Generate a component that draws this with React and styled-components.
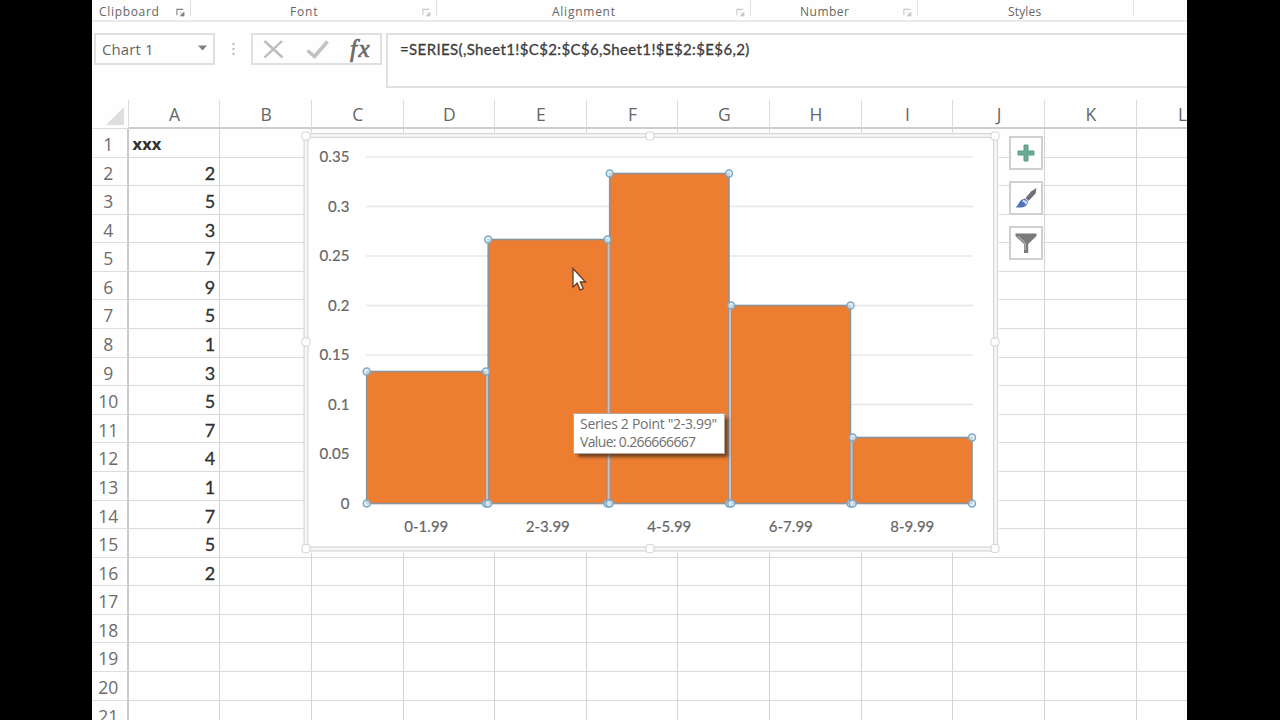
import React from 'react'
import styled, { createGlobalStyle } from 'styled-components'

const GlobalStyle = createGlobalStyle`
	* {
		box-sizing: border-box;
	}
	body {
		margin: 0;
		background: #000000;
		overflow: hidden;
	}
`
const Screen = styled.div`
	width: 1280px;
	height: 720px;
	padding: 0 93px 0 92px;
	background: #000000;
	font-family: 'Open Sans', 'Noto Sans', sans-serif;
`
const Workbook = styled.div`
	position: relative;
	display: flex;
	flex-direction: column;
	width: 1095px;
	height: 720px;
	overflow: hidden;
	background: #fefefe;
`
const Ribbon = styled.div`
	display: flex;
	flex: none;
	height: 22px;
	border-bottom: 2px solid #e9e9e9;
`
const RibbonGroup = styled.div`
	display: flex;
	flex: none;
	justify-content: space-between;
	width: ${(p) => p.$width}px;
	height: 16px;
	padding: 3px 5px 0 ${(p) => p.$indent}px;
	border-right: 1px solid #e2e2e2;
	color: #666666;
	font-size: 12px;
	font-weight: 500;
	line-height: 18px;
	letter-spacing: ${(p) => p.$spacing || 0}px;
	white-space: nowrap;
`
const Launcher = styled.svg`
	flex: none;
	width: 9px;
	height: 9px;
	margin-top: 5px;
	color: ${(p) => (p.$active ? '#808080' : '#c8c8c8')};
`
const FormulaRow = styled.div`
	display: flex;
	flex: none;
	align-items: flex-start;
	height: 78px;
	padding: 11px 0 0 2px;
`
const NameBox = styled.div`
	display: flex;
	align-items: center;
	justify-content: space-between;
	width: 121px;
	height: 32px;
	padding: 0 6px 0 6px;
	border: 2px solid #e0e0e0;
	color: #666666;
	font-size: 15px;
	font-weight: 500;
	letter-spacing: 0.1px;
`
const DropArrow = styled.svg`
	width: 9px;
	height: 6px;
	margin-bottom: 3px;
`
const Dots = styled.svg`
	width: 3px;
	height: 14px;
	margin: 9px 16px 0 17px;
`
const FormulaButtons = styled.div`
	width: 131px;
	height: 32px;
	border: 2px solid #e0e0e0;
`
const FormulaBar = styled.div`
	flex: 1;
	height: 55px;
	margin-left: 4px;
	padding: 3px 0 0 12px;
	border: 2px solid #e0e0e0;
	border-right: none;
	color: #3c3c3c;
	font-family: Lato, sans-serif;
	font-size: 15px;
	font-weight: 400;
	line-height: 22px;
	white-space: nowrap;
`
const FormulaText = styled.span`
	letter-spacing: 0.38px;
	-webkit-text-stroke: 0.3px #3c3c3c;
`
const SheetRow = styled.div`
	display: grid;
	flex: none;
	grid-template-columns: 36.6px repeat(12, 91.65px);
	grid-template-rows: 100%;
	height: ${(p) => (p.$header ? 29 : 28.58)}px;
`
const ColumnHead = styled.div`
	padding: 2px 0 0 1px;
	border-right: 1px solid #dcdcdc;
	border-bottom: 2px solid #cdcdcd;
	color: #666666;
	font-size: 17.5px;
	line-height: 24px;
	text-align: center;
`
const Corner = styled.div`
	display: flex;
	align-items: flex-end;
	justify-content: flex-end;
	padding: 0 4px 3px 0;
	border-right: 1px solid #dcdcdc;
	border-bottom: 1px solid #dcdcdc;
`
const RowHead = styled.div`
	padding-right: 2px;
	border-right: 2px solid #cacaca;
	border-bottom: 1px solid #dedede;
	color: #6c6c6c;
	font-size: 17.5px;
	line-height: 30px;
	text-align: center;
`
const Cell = styled.div`
	padding: 0 4px;
	border-right: 1px solid #d4d4d4;
	border-bottom: 1px solid #dadada;
	color: #303030;
	font-family: ${(p) => (p.$bold ? "'Open Sans', sans-serif" : 'Lato, sans-serif')};
	font-size: ${(p) => (p.$bold ? 16.5 : 18)}px;
	font-weight: ${(p) => (p.$bold ? 700 : 400)};
	line-height: 30px;
	text-align: ${(p) => (p.$bold ? 'left' : 'right')};
	-webkit-text-stroke: ${(p) => (p.$bold ? 0 : 0.3)}px #303030;
`
// the chart object floats over the cells
const ChartObject = styled.div`
	position: absolute;
	left: 208px;
	top: 130px;
	width: 700px;
	height: 425px;
`
const ChartLabel = styled.text`
	fill: #666666;
	stroke: #666666;
	stroke-width: 0.2px;
	font-family: Lato, sans-serif;
	font-size: 15px;
`
const ChartTools = styled.div`
	position: absolute;
	left: 917px;
	top: 136px;
	display: flex;
	flex-direction: column;
	gap: 11px;
`
const ToolButton = styled.div`
	display: flex;
	align-items: center;
	justify-content: center;
	width: 34px;
	height: 34px;
	border: 2px solid #d0d0d0;
	background: #ffffff;
`
const Tooltip = styled.div`
	position: absolute;
	left: 481px;
	top: 413px;
	width: 152px;
	height: 41px;
	padding: 1px 0 0 6px;
	border: 1px solid #b5a79e;
	background: #ffffff;
	box-shadow: 4px 4px 3px -1px rgba(70, 45, 30, 0.75);
	color: #707070;
	font-size: 14px;
	line-height: 18px;
	white-space: nowrap;
`
const TooltipLine = styled.div`
	letter-spacing: ${(p) => p.$spacing}px;
`
const Cursor = styled.svg`
	position: absolute;
	left: 479px;
	top: 266px;
	width: 16px;
	height: 27px;
`

const groups = [
	{ name: 'Clipboard', width: 99, indent: 7, launcher: 'on', spacing: 0.68 },
	{ name: 'Font', width: 246, indent: 99, launcher: 'off', spacing: 0.8 },
	{ name: 'Alignment', width: 314, indent: 115, launcher: 'off', spacing: 0.75 },
	{ name: 'Number', width: 167, indent: 49, launcher: 'off', spacing: 0.5 },
	{ name: 'Styles', width: 216, indent: 90, launcher: null, spacing: 0.15 },
]
const columns = ['A', 'B', 'C', 'D', 'E', 'F', 'G', 'H', 'I', 'J', 'K', 'L']
const values = ['xxx', 2, 5, 3, 7, 9, 5, 1, 3, 5, 7, 4, 1, 7, 5, 2, '', '', '', '', '']
const ticks = ['0', '0.05', '0.1', '0.15', '0.2', '0.25', '0.3', '0.35']
const bars = [
	{ label: '0-1.99', value: 2 / 15 },
	{ label: '2-3.99', value: 4 / 15 },
	{ label: '4-5.99', value: 5 / 15 },
	{ label: '6-7.99', value: 3 / 15 },
	{ label: '8-9.99', value: 1 / 15 },
]
const BASE = 503.5
const yOf = (v) => BASE - v * 990
const barX = (i) => 366.7 + i * 121.5
const BAR_WIDTH = 119.3

const Chart = () => (
	<ChartObject>
		<svg width='700' height='425' viewBox='300 130 700 425'>
			<rect x='303.5' y='132.5' width='695' height='420' fill='#ffffff' />
			<rect x='306' y='135.5' width='689.5' height='413.5' rx='2' fill='none' stroke='#d6d6d6' strokeWidth='5' />
			<rect x='306' y='135.5' width='689.5' height='413.5' rx='2' fill='none' stroke='#f8f8f8' strokeWidth='2.6' />
			{[306, 650, 995].map((x) =>
				[136, 342, 548.5].map((y) =>
					x === 650 && y === 342 ? null : (
						<rect key={`${x}-${y}`} x={x - 4} y={y - 4} width='8' height='8' rx='2.5' fill='#ffffff' stroke='#d2d2d2' />
					)
				)
			)}
			{ticks.map((t) => (
				<g key={t}>
					<line x1='366' x2='973' y1={yOf(Number(t))} y2={yOf(Number(t))} stroke='#e8e8e8' strokeWidth='1.6' />
					<ChartLabel
						x='349.5'
						y={yOf(Number(t)) + 5.2}
						textAnchor='end'
						textLength={{ 1: 8.5, 3: 21.5, 4: 30 }[t.length]}
					>
						{t}
					</ChartLabel>
				</g>
			))}
			{bars.map((b, i) => (
				<g key={b.label}>
					<rect
						x={barX(i)}
						y={yOf(b.value)}
						width={BAR_WIDTH}
						height={BASE - yOf(b.value)}
						fill='#ed7d31'
						stroke='#8d9499'
						strokeWidth='1.6'
					/>
					<ChartLabel x={barX(i) + 59.6} y='531.5' textAnchor='middle' textLength='44'>
						{b.label}
					</ChartLabel>
				</g>
			))}
			{bars.slice(1).map((b, i) => (
				<line
					key={b.label}
					x1={barX(i + 1) - 1.1}
					x2={barX(i + 1) - 1.1}
					y1={yOf(Math.min(b.value, bars[i].value))}
					y2={BASE}
					stroke='#c6c3c2'
					strokeWidth='1.8'
				/>
			))}
			{bars.map((b, i) =>
				[barX(i), barX(i) + BAR_WIDTH].map((x) =>
					[yOf(b.value), BASE].map((y) => (
						<circle
							key={`${x}-${y}`}
							cx={x}
							cy={y}
							r='3.5'
							fill='#dfeaf2'
							fillOpacity='0.75'
							stroke='#7aa9ca'
							strokeWidth='1.5'
						/>
					))
				)
			)}
		</svg>
	</ChartObject>
)

const App = () => {
	return (
		<Screen>
			<GlobalStyle />
			<Workbook>
				<Ribbon>
					{groups.map((g) => (
						<RibbonGroup key={g.name} $width={g.width} $indent={g.indent} $spacing={g.spacing}>
							<span>{g.name}</span>
							{g.launcher && (
								<Launcher $active={g.launcher === 'on'} viewBox='0 0 10 10'>
									<path d='M1 8V1.5H8' fill='none' stroke='currentColor' strokeWidth='1.2' />
									<path d='M4.5 4.5L7 7M9 4.5V9H4.5Z' fill='currentColor' stroke='currentColor' strokeWidth='0.6' />
								</Launcher>
							)}
						</RibbonGroup>
					))}
				</Ribbon>
				<FormulaRow>
					<NameBox>
						Chart 1
						<DropArrow viewBox='0 0 9 6'>
							<path d='M0 0.5H9L4.5 5.5Z' fill='#808080' />
						</DropArrow>
					</NameBox>
					<Dots viewBox='0 0 3 14'>
						<path d='M0.5 1h2v2h-2zM0.5 6h2v2h-2zM0.5 11h2v2h-2z' fill='#b5b5b5' />
					</Dots>
					<FormulaButtons>
						<svg width='127' height='28' viewBox='253 35 127 28'>
							<path d='M264.5 41L282.5 57.5M282 41L264.5 57.5' stroke='#bcbcbc' strokeWidth='2.4' fill='none' />
							<path d='M307.5 50.5L314.5 56.5L327.5 41.5' stroke='#c2c2c2' strokeWidth='3.6' fill='none' />
							<text
								x='350'
								y='57'
								fill='#6a6a6a'
								stroke='#6a6a6a'
								strokeWidth='0.7'
								fontFamily='Liberation Serif, serif'
								fontSize='25'
								fontStyle='italic'
								textLength='19.5'
							>
								fx
							</text>
						</svg>
					</FormulaButtons>
					<FormulaBar>
						<FormulaText>=SERIES(,Sheet1!$C$2:$C$6,Sheet1!$E$2:$E$6,2)</FormulaText>
					</FormulaBar>
				</FormulaRow>
				<SheetRow $header>
					<Corner>
						<svg width='18' height='18' viewBox='0 0 18 18'>
							<path d='M18 0V18H0Z' fill='#dedede' />
						</svg>
					</Corner>
					{columns.map((c) => (
						<ColumnHead key={c}>{c}</ColumnHead>
					))}
				</SheetRow>
				{values.map((v, row) => (
					<SheetRow key={row}>
						<RowHead>{row + 1}</RowHead>
						{columns.map((c) => (
							<Cell key={c} $bold={row === 0}>
								{c === 'A' ? v : null}
							</Cell>
						))}
					</SheetRow>
				))}
				<Chart />
				<ChartTools>
					<ToolButton>
						<svg width='18' height='18' viewBox='0 0 18 18'>
							<path d='M7 1h4v6h6v4h-6v6H7v-6H1V7h6Z' fill='#6bab93' stroke='#5a9e86' />
						</svg>
					</ToolButton>
					<ToolButton>
						<svg width='24' height='24' viewBox='0 0 24 24'>
							<path d='M22.5 2L21.5 7.5L14.5 15L11.5 12L17 5.5Z' fill='#707070' />
							<path d='M11 12.5L14.5 16L12 20L8 21.5L1.5 21.5C4.5 19.5 5 15 8 13.5Z' fill='#4b73b5' />
							<path d='M9.5 13.5L14 16L11.5 19.2C11.5 17 10 16 8 15.5Z' fill='#c9dcf2' />
						</svg>
					</ToolButton>
					<ToolButton>
						<svg width='22' height='22' viewBox='0 0 22 22'>
							<path d='M0.5 1.5H21.5V4L13.2 12V21H9V12L0.5 4Z' fill='#7b7b7b' />
							<path d='M3 4L10.2 11V18' fill='none' stroke='#c8c8c8' strokeWidth='1' />
						</svg>
					</ToolButton>
				</ChartTools>
				<Tooltip>
					<TooltipLine $spacing={-0.3}>Series 2 Point "2-3.99"</TooltipLine>
					<TooltipLine $spacing={-0.65}>Value: 0.266666667</TooltipLine>
				</Tooltip>
				<Cursor viewBox='0 0 16 27'>
					<path
						d='M2 2.5V21L6.2 17.2L9.2 24L12.2 22.5L9.3 16H14.5Z'
						fill='#ffffff'
						stroke='#6b3c22'
						strokeWidth='1.3'
					/>
				</Cursor>
			</Workbook>
		</Screen>
	)
}

export default App
